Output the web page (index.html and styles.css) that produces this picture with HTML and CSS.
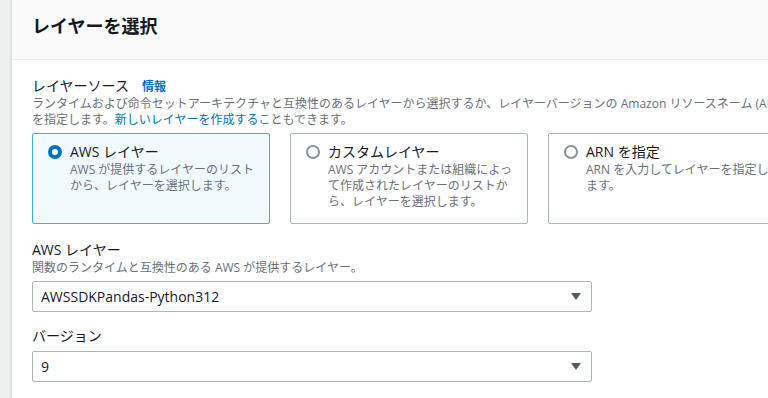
FILE: index.html
```html
<!DOCTYPE html>
<html lang="ja">
<head>
<meta charset="utf-8">
<title>レイヤーを選択</title>
<link rel="stylesheet" href="styles.css">
</head>
<body>
<div class="page">
  <div class="rail"></div>
  <section class="panel">
    <header class="panel-header">
      <h2 class="panel-title">レイヤーを選択</h2>
    </header>
    <div class="panel-body">
      <div class="source">
        <div class="label-row">
          <span class="label">レイヤーソース</span>
          <a class="info">情報</a>
        </div>
        <p class="desc">ランタイムおよび命令セットアーキテクチャと互換性のあるレイヤーから選択するか、レイヤーバージョンの Amazon リソースネーム (ARN) を指定します。<a class="link">新しいレイヤーを作成する</a>こともできます。</p>
      </div>

      <div class="tiles">
        <div class="tile selected">
          <span class="radio on"></span>
          <div class="tile-text">
            <div class="tile-title">AWS レイヤー</div>
            <div class="tile-desc">AWS が提供するレイヤーのリストから、レイヤーを選択します。</div>
          </div>
        </div>
        <div class="tile">
          <span class="radio"></span>
          <div class="tile-text">
            <div class="tile-title">カスタムレイヤー</div>
            <div class="tile-desc">AWS アカウントまたは組織によって作成されたレイヤーのリストから、レイヤーを選択します。</div>
          </div>
        </div>
        <div class="tile">
          <span class="radio"></span>
          <div class="tile-text">
            <div class="tile-title">ARN を指定</div>
            <div class="tile-desc">ARN を入力してレイヤーを指定します。</div>
          </div>
        </div>
      </div>

      <div class="field first">
        <div class="field-head">
          <div class="label">AWS レイヤー</div>
          <div class="field-desc">関数のランタイムと互換性のある AWS が提供するレイヤー。</div>
        </div>
        <div class="select">
          <span class="select-value">AWSSDKPandas-Python312</span>
          <svg class="caret" width="10" height="7" viewBox="0 0 10 7"><path d="M0 0H10L5 7Z" fill="#545b64"/></svg>
        </div>
      </div>

      <div class="field">
        <div class="field-head">
          <div class="label">バージョン</div>
        </div>
        <div class="select">
          <span class="select-value">9</span>
          <svg class="caret" width="10" height="7" viewBox="0 0 10 7"><path d="M0 0H10L5 7Z" fill="#545b64"/></svg>
        </div>
      </div>
    </div>
  </section>
</div>
</body>
</html>
```

FILE: styles.css
```css
html, body {
  margin: 0;
  padding: 0;
}
body {
  width: 768px;
  height: 398px;
  overflow: hidden;
  background: #f2f3f3;
  font-family: "Open Sans", "Noto Sans CJK JP", sans-serif;
  color: #16191f;
}
.page {
  display: flex;
  width: 820px;
  height: 398px;
}
.rail {
  width: 11px;
  flex: none;
  background: #eef0f0;
}
.panel {
  flex: 1;
  background: #ffffff;
  border-left: 1px solid #dde1e2;
  box-shadow: -1px 0 1px rgba(0, 0, 0, 0.04);
}
.panel-header {
  background: #fafafa;
  border-bottom: 1px solid #eaeded;
  padding: 15px 20px 22px;
}
.panel-title {
  margin: 0;
  font-size: 18px;
  line-height: 22px;
  font-weight: 700;
  color: #16191f;
}
.panel-body {
  padding: 16px 20px 0;
}
.label-row {
  display: flex;
  align-items: center;
  height: 20px;
}
.label {
  font-size: 14px;
  line-height: 20px;
  color: #16191f;
}
.info {
  margin-left: 13px;
  font-size: 12px;
  font-weight: 700;
  color: #0073bb;
}
.desc {
  margin: 0;
  width: 766px;
  font-size: 12px;
  line-height: 16px;
  color: #687078;
}
.link {
  color: #0073bb;
}
.tiles {
  display: grid;
  grid-template-columns: repeat(3, 238px);
  column-gap: 20px;
  margin-top: 5px;
}
.tile {
  display: flex;
  align-items: flex-start;
  box-sizing: border-box;
  padding: 8px 10px 13px 15px;
  border: 1px solid #aab7b8;
  border-radius: 2px;
  background: #ffffff;
}
.tile.selected {
  background: #f1faff;
  border-color: #44aedc;
}
.radio {
  flex: none;
  box-sizing: border-box;
  width: 14px;
  height: 14px;
  margin-top: 3px;
  margin-right: 8px;
  border: 2px solid #879596;
  border-radius: 50%;
  background: #ffffff;
}
.radio.on {
  border: 4px solid #0073bb;
}
.tile-title {
  font-size: 14px;
  line-height: 20px;
  color: #16191f;
}
.tile-desc {
  font-size: 12px;
  line-height: 16px;
  color: #687078;
}
.field {
  margin-top: 14px;
}
.field.first {
  margin-top: 16px;
}
.field-head {
  padding-bottom: 5px;
}
.field-desc {
  font-size: 12px;
  line-height: 16px;
  color: #687078;
}
.select {
  box-sizing: border-box;
  width: 560px;
  height: 31px;
  display: flex;
  align-items: center;
  justify-content: space-between;
  padding: 0 10px 0 8px;
  border: 1px solid #aab7b8;
  border-radius: 2px;
  background: #ffffff;
}
.select-value {
  font-size: 14px;
  color: #16191f;
}
.caret {
  display: block;
}
```
